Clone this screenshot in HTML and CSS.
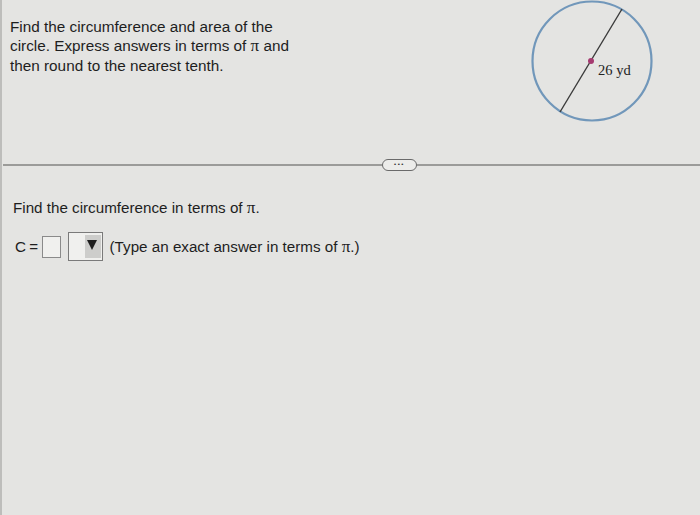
FILE: index.html
```html
<!DOCTYPE html>
<html>
<head>
<meta charset="utf-8">
<link rel="stylesheet" href="styles.css">
</head>
<body>
<div class="page">
  <div class="top">
    <p class="prompt">Find the circumference and area of the<br>circle. Express answers in terms of <span class="pi">π</span> and<br>then round to the nearest tenth.</p>
    <svg class="figure" width="130" height="126" viewBox="0 0 130 126">
      <circle cx="62" cy="61" r="59.5" fill="none" stroke="#7197ba" stroke-width="2.2"/>
      <line x1="92" y1="9" x2="30" y2="112" stroke="#3a3a3a" stroke-width="1.4"/>
      <circle cx="61" cy="61" r="3" fill="#a53a70"/>
      <text x="68" y="75" font-family="Liberation Serif, serif" font-size="14.5" fill="#222">26 yd</text>
    </svg>
  </div>
  <div class="divider">
    <span class="more">•••</span>
  </div>
  <div class="question">
    <p class="ask">Find the circumference in terms of <span class="pi">π</span>.</p>
    <div class="answer">
      <span class="label">C =</span>
      <span class="box"></span>
      <span class="select"><span class="arrow"></span></span>
      <span class="hint">(Type an exact answer in terms of <span class="pi">π</span>.)</span>
    </div>
  </div>
</div>
</body>
</html>
```
FILE: styles.css
```css
html, body {
  margin: 0;
  padding: 0;
}
body {
  background: #e4e4e2;
  font-family: "Liberation Sans", Arial, sans-serif;
  color: #1e1e1e;
  width: 700px;
  height: 515px;
  overflow: hidden;
}
.page {
  border-left: 2px solid #bdbdbb;
  height: 515px;
  box-sizing: border-box;
}
.top {
  display: flex;
  justify-content: space-between;
  height: 159px;
}
.prompt {
  margin: 17px 0 0 8px;
  font-size: 15.3px;
  line-height: 19.3px;
}
.pi {
  font-family: "Liberation Serif", serif;
  font-size: 17px;
}
.figure {
  margin: 0 40px 0 0;
}
.divider {
  position: relative;
  height: 14px;
  display: flex;
  align-items: center;
  margin-left: 1px;
}
.divider::before {
  content: "";
  position: absolute;
  left: 0;
  right: 0;
  top: 5px;
  height: 2px;
  background: #9b9b99;
}
.more {
  position: relative;
  width: 35px;
  height: 12px;
  box-sizing: border-box;
  border: 1.5px solid #6a6a6a;
  border-radius: 6px;
  background: #ececea;
  font-size: 6px;
  font-weight: bold;
  letter-spacing: 1.5px;
  line-height: 9px;
  text-align: center;
  color: #333;
  margin-left: 379px;
  margin-top: -2px;
}
.question {
  padding: 0 0 0 11px;
}
.ask {
  margin: 25px 0 0 0;
  font-size: 15.2px;
  line-height: 19px;
}
.answer {
  display: flex;
  align-items: center;
  margin-top: 15px;
  font-size: 15.2px;
}
.label {
  margin-left: 2px;
  margin-right: 4px;
  letter-spacing: -0.5px;
}
.box {
  width: 17px;
  height: 20px;
  border: 1px solid #8a8a8a;
  background: #f0f0ee;
  margin-right: 7px;
}
.select {
  width: 35px;
  height: 29px;
  border: 1px solid #7a7a7a;
  background: #f0f0ee;
  display: flex;
  justify-content: flex-end;
  box-sizing: border-box;
  padding: 2px 1px 2px 2px;
  margin-right: 7px;
}
.arrow {
  width: 16px;
  height: 23px;
  background: #cdcdcb;
  position: relative;
}
.arrow::after {
  content: "";
  position: absolute;
  left: 2px;
  top: 5px;
  border-left: 5.5px solid transparent;
  border-right: 5.5px solid transparent;
  border-top: 10px solid #1e1e1e;
}
.hint {
  font-size: 15.2px;
}
```
